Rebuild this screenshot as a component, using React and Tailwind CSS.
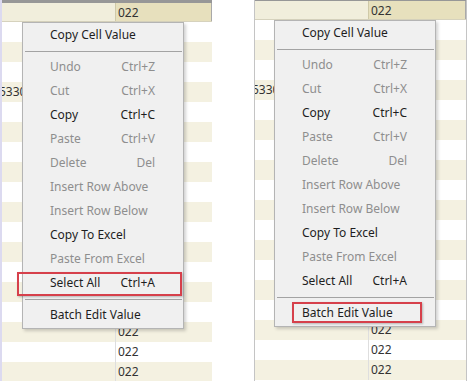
const items = [
  { label: "Undo", key: "Ctrl+Z", off: true },
  { label: "Cut", key: "Ctrl+X", off: true },
  { label: "Copy", key: "Ctrl+C" },
  { label: "Paste", key: "Ctrl+V", off: true },
  { label: "Delete", key: "Del", off: true },
  { label: "Insert Row Above", off: true },
  { label: "Insert Row Below", off: true },
  { label: "Copy To Excel" },
  { label: "Paste From Excel", off: true },
  { label: "Select All", key: "Ctrl+A" },
];

function Item({ label, shortcut, off }) {
  return (
    <div
      className={`flex h-6 items-center pl-[27px] pr-[28px] ${
        off ? "text-[#8e8e8e]" : "text-[#1e1e1e]"
      }`}
    >
      <span className="flex-1 whitespace-nowrap">{label}</span>
      {shortcut && <span className="whitespace-nowrap">{shortcut}</span>}
    </div>
  );
}

function Separator() {
  return (
    <div className="flex h-2 items-center pl-[2px] pr-[1px]">
      <div className="h-px w-full bg-[#a3a3a3]" />
    </div>
  );
}

function Menu({ className }) {
  return (
    <div
      className={`absolute w-[162px] border border-[#b4b4b4] bg-[#f0f0f0] text-[12px] shadow-[2px_2px_3px_rgba(0,0,0,0.18)] ${className}`}
    >
      <Item label="Copy Cell Value" />
      <Separator />
      {items.map((it) => (
        <Item key={it.label} label={it.label} shortcut={it.key} off={it.off} />
      ))}
      <Separator />
      <Item label="Batch Edit Value" />
      <div className="h-px" />
    </div>
  );
}

// one data grid with its open context menu
function Grid({ left, topStrip, menuPos, edge, children }) {
  const rows = Array.from({ length: 18 });
  return (
    <div className={`relative h-[381px] w-[212px] overflow-hidden ${edge}`}>
      <div className={`${topStrip} bg-[#979797]`} />
      <div className="flex h-[19px] border-b border-[#d6d2bd] text-[12px] text-[#333]">
        <div className="w-[113px] bg-[#f1eedc]" />
        <div className="flex-1 border-l border-[#cfc9a8] border-r border-r-[#a9a9a9] bg-[#e7e0bd] pl-[2px] leading-[19px]">
          022
        </div>
      </div>
      {rows.map((_, i) => (
        <div
          key={i}
          className={`flex h-5 text-[12px] leading-5 text-[#333] ${
            i % 2 ? "bg-[#f4f1e1]" : "bg-white"
          }`}
        >
          <div className="relative w-[113px] overflow-hidden">
            {i === 3 && <span className="absolute left-[-3px] top-0">53306</span>}
          </div>
          <div className="flex-1 border-l border-[#dedede] pl-[2px]">
            {i >= 15 ? "022" : ""}
          </div>
        </div>
      ))}
      <Menu className={menuPos} />
      {children}
    </div>
  );
}

export default function App() {
  return (
    <div
      className="flex h-[381px] w-[474px] overflow-hidden bg-white"
      style={{ fontFamily: '"Noto Sans", "Open Sans", sans-serif' }}
    >
      <Grid
        topStrip="h-[3px]"
        menuPos="left-[20px] top-[22px]"
        edge="border-l-2 border-[#dcdaf0] w-[212px]"
      >
        <div className="absolute left-[15px] top-[272px] h-[24px] w-[165px] border-2 border-[#d6404b] shadow-[1px_1px_2px_rgba(0,0,0,0.25)]" />
      </Grid>
      <div className="w-[42px]" />
      <div className="border-l border-[#c4c4c4]">
        <Grid
          topStrip="h-px"
          menuPos="left-[19px] top-[20px]"
          edge="w-[211px] border-r border-[#c4c4c4]"
        >
          <div className="absolute left-[37px] top-[302px] h-[21px] w-[130px] border-2 border-[#d6404b] shadow-[1px_1px_2px_rgba(0,0,0,0.25)]" />
        </Grid>
      </div>
    </div>
  );
}
